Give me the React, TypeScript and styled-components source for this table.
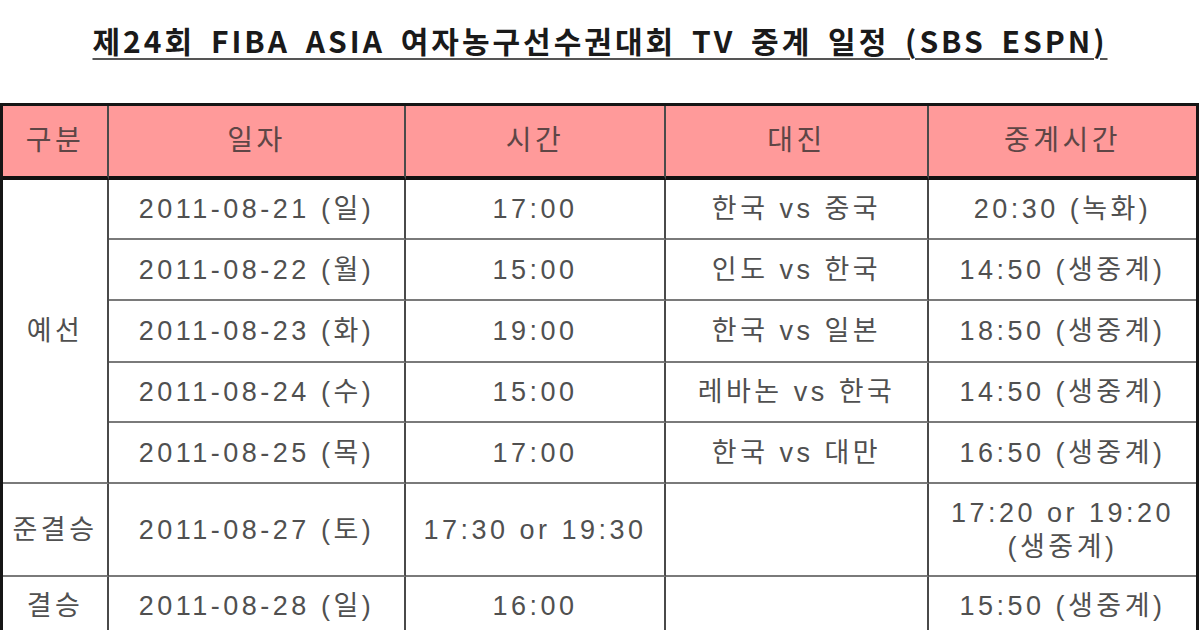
import React from 'react';
import styled, { createGlobalStyle } from 'styled-components';

const GlobalStyle = createGlobalStyle`
  html, body {
    margin: 0;
    padding: 0;
    background: #ffffff;
  }
  body {
    width: 1200px;
    height: 630px;
    overflow: hidden;
  }
`;

const Page = styled.div`
  width: 1200px;
  height: 630px;
  overflow: hidden;
  font-family: 'Liberation Sans', 'Noto Sans CJK KR', sans-serif;
`;

const TitleBar = styled.div`
  height: 103px;
  display: flex;
  justify-content: center;
  align-items: flex-start;
  padding-top: 22px;
  box-sizing: border-box;
`;

const Title = styled.h1`
  margin: 0;
  font-family: 'Noto Sans CJK KR', sans-serif;
  font-size: 30px;
  line-height: 36px;
  font-weight: 700;
  color: #1a1a1a;
  letter-spacing: 3px;
  word-spacing: 6px;
  text-decoration: underline;
  text-decoration-thickness: 2px;
  text-underline-offset: 5px;
  text-decoration-color: #555;
`;

const Grid = styled.div`
  width: 1199px;
  box-sizing: border-box;
  display: grid;
  grid-template-columns: 106px 297px 260px 263px 267px;
  grid-template-rows: 74px 60px 61px 62px 60px 61px 93px 60px;
  border-top: 3px solid #151515;
  border-left: 3px solid #151515;
  border-right: 3px solid #151515;
`;

const Cell = styled.div<{ $head?: boolean; $last?: boolean; $span?: number }>`
  box-sizing: border-box;
  display: flex;
  flex-direction: column;
  align-items: center;
  justify-content: center;
  text-align: center;
  font-size: ${(p) => (p.$head ? '28px' : '27px')};
  line-height: 34px;
  letter-spacing: 3.5px;
  color: ${(p) => (p.$head ? '#5e4646' : '#505050')};
  background: ${(p) => (p.$head ? '#ff9a9a' : '#ffffff')};
  border-right: ${(p) => (p.$last ? 'none' : '2px solid #4a4a4a')};
  border-bottom: ${(p) => (p.$head ? '4px solid #111' : '2px solid #7a7a7a')};
  grid-row: ${(p) => (p.$span ? `span ${p.$span}` : 'auto')};
  white-space: nowrap;
`;

const heads = ['구분', '일자', '시간', '대진', '중계시간'];

interface Match {
  date: string;
  time: string;
  game: string;
  air: string[];
}

const prelim: Match[] = [
  { date: '2011-08-21 (일)', time: '17:00', game: '한국 vs 중국', air: ['20:30 (녹화)'] },
  { date: '2011-08-22 (월)', time: '15:00', game: '인도 vs 한국', air: ['14:50 (생중계)'] },
  { date: '2011-08-23 (화)', time: '19:00', game: '한국 vs 일본', air: ['18:50 (생중계)'] },
  { date: '2011-08-24 (수)', time: '15:00', game: '레바논 vs 한국', air: ['14:50 (생중계)'] },
  { date: '2011-08-25 (목)', time: '17:00', game: '한국 vs 대만', air: ['16:50 (생중계)'] },
];

const finals: (Match & { stage: string })[] = [
  { stage: '준결승', date: '2011-08-27 (토)', time: '17:30 or 19:30', game: '', air: ['17:20 or 19:20', '(생중계)'] },
  { stage: '결승', date: '2011-08-28 (일)', time: '16:00', game: '', air: ['15:50 (생중계)'] },
];

const MatchCells: React.FC<{ m: Match }> = ({ m }) => (
  <>
    <Cell>{m.date}</Cell>
    <Cell>{m.time}</Cell>
    <Cell>{m.game}</Cell>
    <Cell $last>
      {m.air.map((line) => (
        <span key={line}>{line}</span>
      ))}
    </Cell>
  </>
);

const App: React.FC = () => {
  return (
    <Page>
      <GlobalStyle />
      <TitleBar>
        <Title>제24회 FIBA ASIA 여자농구선수권대회 TV 중계 일정 (SBS ESPN)</Title>
      </TitleBar>
      <Grid>
        {heads.map((h, i) => (
          <Cell $head $last={i === heads.length - 1} key={h}>
            {h}
          </Cell>
        ))}
        <Cell $span={5}>예선</Cell>
        {prelim.map((m) => (
          <MatchCells m={m} key={m.date} />
        ))}
        {finals.map((m) => (
          <React.Fragment key={m.date}>
            <Cell>{m.stage}</Cell>
            <MatchCells m={m} />
          </React.Fragment>
        ))}
      </Grid>
    </Page>
  );
};

export default App;
